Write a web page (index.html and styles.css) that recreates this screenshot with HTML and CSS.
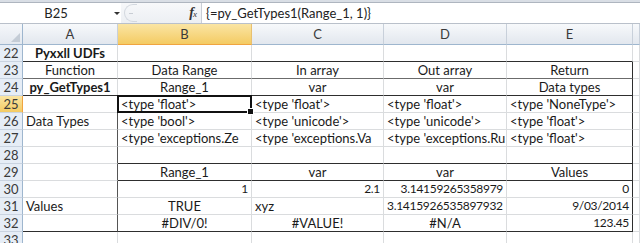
FILE: index.html
```html
<!DOCTYPE html>
<html lang="en">
<head>
    <meta charset="UTF-8">
    <title>Pyxll UDF types</title>
    <link rel="stylesheet" href="styles.css">
</head>
<body>
    <div class="ribbon-edge"></div>
    <div class="formula-bar">
        <div class="name-box">B25</div>
        <div class="name-arrow"></div>
        <div class="fx-area">
            <div class="grip"><span></span></div>
            <div class="fx"><i>f</i><span>x</span></div>
        </div>
        <div class="formula">{=py_GetTypes1(Range_1, 1)}</div>
    </div>

    <div class="sheet">
        <!-- column headers -->
        <div class="corner"><span></span></div>
        <div class="ch">A</div>
        <div class="ch sel">B</div>
        <div class="ch">C</div>
        <div class="ch">D</div>
        <div class="ch">E</div>
        <div class="ch"></div>

        <!-- 22 -->
        <div class="rh">22</div>
        <div class="cell c b bb">Pyxxll UDFs</div>
        <div class="cell bb"></div>
        <div class="cell bb"></div>
        <div class="cell bb"></div>
        <div class="cell bb"></div>
        <div class="cell"></div>

        <!-- 23 -->
        <div class="rh">23</div>
        <div class="cell c bm">Function</div>
        <div class="cell c bm">Data Range</div>
        <div class="cell c bm">In array</div>
        <div class="cell c bm">Out array</div>
        <div class="cell c bm br">Return</div>
        <div class="cell"></div>

        <!-- 24 -->
        <div class="rh">24</div>
        <div class="cell c b bb">py_GetTypes1</div>
        <div class="cell c bb">Range_1</div>
        <div class="cell c bb">var</div>
        <div class="cell c bb">var</div>
        <div class="cell c bb br">Data types</div>
        <div class="cell"></div>

        <!-- 25 -->
        <div class="rh sel">25</div>
        <div class="cell bv"></div>
        <div class="cell active">&lt;type 'float'&gt;</div>
        <div class="cell">&lt;type 'float'&gt;</div>
        <div class="cell">&lt;type 'float'&gt;</div>
        <div class="cell br">&lt;type 'NoneType'&gt;</div>
        <div class="cell"></div>

        <!-- 26 -->
        <div class="rh">26</div>
        <div class="cell bv">Data Types</div>
        <div class="cell">&lt;type 'bool'&gt;</div>
        <div class="cell">&lt;type 'unicode'&gt;</div>
        <div class="cell">&lt;type 'unicode'&gt;</div>
        <div class="cell br">&lt;type 'float'&gt;</div>
        <div class="cell"></div>

        <!-- 27 -->
        <div class="rh">27</div>
        <div class="cell bv"></div>
        <div class="cell">&lt;type 'exceptions.Ze</div>
        <div class="cell">&lt;type 'exceptions.Va</div>
        <div class="cell">&lt;type 'exceptions.Ru</div>
        <div class="cell br">&lt;type 'float'&gt;</div>
        <div class="cell"></div>

        <!-- 28 -->
        <div class="rh">28</div>
        <div class="cell bv"></div>
        <div class="cell bb"></div>
        <div class="cell bb"></div>
        <div class="cell bb"></div>
        <div class="cell bb br"></div>
        <div class="cell"></div>

        <!-- 29 -->
        <div class="rh">29</div>
        <div class="cell bv"></div>
        <div class="cell c bb">Range_1</div>
        <div class="cell c bb">var</div>
        <div class="cell c bb">var</div>
        <div class="cell c bb br">Values</div>
        <div class="cell"></div>

        <!-- 30 -->
        <div class="rh">30</div>
        <div class="cell bv"></div>
        <div class="cell r num">1</div>
        <div class="cell r num">2.1</div>
        <div class="cell r num">3.14159265358979</div>
        <div class="cell r num br">0</div>
        <div class="cell"></div>

        <!-- 31 -->
        <div class="rh">31</div>
        <div class="cell bv">Values</div>
        <div class="cell c">TRUE</div>
        <div class="cell">xyz</div>
        <div class="cell num">3.1415926535897932</div>
        <div class="cell r num br">9/03/2014</div>
        <div class="cell"></div>

        <!-- 32 -->
        <div class="rh">32</div>
        <div class="cell bv bb"></div>
        <div class="cell c bb">#DIV/0!</div>
        <div class="cell c bb">#VALUE!</div>
        <div class="cell c bb">#N/A</div>
        <div class="cell r num bb br">123.45</div>
        <div class="cell"></div>

        <!-- 33 -->
        <div class="rh">33</div>
        <div class="cell"></div>
        <div class="cell"></div>
        <div class="cell"></div>
        <div class="cell"></div>
        <div class="cell"></div>
        <div class="cell"></div>
    </div>
</body>
</html>
```

FILE: styles.css
```css
body {
    margin: 0;
    width: 640px;
    height: 243px;
    overflow: hidden;
    background: #fff;
    font-family: Lato, "Liberation Sans", sans-serif;
    font-size: 13px;
    color: #1a1a1a;
}

/* top strip + formula bar */
.ribbon-edge {
    height: 2px;
    background: #d9dee5;
    border-bottom: 1px solid #aeb5bf;
}

.formula-bar {
    display: flex;
    height: 20px;
    border-bottom: 1px solid #b9c0ca;
    background: #fff;
}

.name-box {
    width: 112px;
    line-height: 20px;
    text-align: center;
    color: #222;
}

.name-arrow {
    width: 9px;
    position: relative;
}

.name-arrow::after {
    content: "";
    position: absolute;
    left: 2px;
    top: 9px;
    border-left: 3px solid transparent;
    border-right: 3px solid transparent;
    border-top: 3px solid #333;
}

.fx-area {
    width: 76px;
    display: flex;
    align-items: center;
    justify-content: space-between;
    background: linear-gradient(#f7f8fa, #eceff3);
    padding-right: 4px;
}

.grip {
    width: 12px;
    height: 16px;
    margin-left: 3px;
    border: 1px solid #d3d8df;
    border-right: none;
    border-radius: 9px 0 0 9px;
    display: flex;
    align-items: center;
    justify-content: center;
}

.grip span {
    width: 4px;
    height: 1px;
    background: #c8cdd4;
}

.fx {
    font-family: "Liberation Serif", serif;
    font-size: 14px;
    color: #333;
    line-height: 20px;
}

.fx i {
    font-weight: bold;
}

.fx span {
    font-size: 9px;
    font-style: italic;
    margin-left: -1px;
}

.formula {
    flex: 1;
    border-left: 1px solid #c9ced6;
    padding-left: 4px;
    line-height: 20px;
    color: #222;
}

/* sheet grid */
.sheet {
    display: grid;
    grid-template-columns: 23px 95px 134px 132px 123px 126px 7px;
    grid-template-rows: 21px;
    grid-auto-rows: 17px;
}

.sheet > div {
    box-sizing: border-box;
    white-space: nowrap;
    overflow: hidden;
}

.corner {
    background: linear-gradient(#f5f7fa, #e3e8ef);
    border-right: 1px solid #9eb6ce;
    border-bottom: 1px solid #9eb6ce;
    position: relative;
}

.corner span {
    position: absolute;
    right: 2px;
    bottom: 2px;
    border-left: 9px solid transparent;
    border-bottom: 9px solid #c4ccd6;
}

.ch {
    background: linear-gradient(#f7f9fb, #e2e7ee);
    border-right: 1px solid #c8d0da;
    border-bottom: 1px solid #9eb6ce;
    text-align: center;
    line-height: 20px;
    color: #3a3a3a;
}

.ch.sel {
    background: linear-gradient(#fae5a4, #f4cb63);
    border-bottom-color: #f0a440;
    border-right-color: #e8c070;
}

.rh {
    background: #e6edf6;
    border-right: 1px solid #9eb6ce;
    border-bottom: 1px solid #c9d3e0;
    text-align: center;
    line-height: 16px;
    color: #3a3a3a;
}

.rh.sel {
    background: linear-gradient(#fae5a4, #f4cb63);
    border-right-color: #f0a440;
}

.cell {
    border-right: 1px solid #dadcde;
    border-bottom: 1px solid #dadcde;
    padding: 0 3px;
    line-height: 16px;
}

.c { text-align: center; }
.r { text-align: right; }
.b { font-weight: bold; }

/* Lato digits run wider than the sheet's font */
.num {
    font-size: 12px;
    letter-spacing: -0.3px;
}

.cell.bb { border-bottom-color: #2e2e2e; }
.cell.bm { border-bottom-color: #6b6b6b; }
.cell.br { border-right-color: #2e2e2e; }
.cell.bv { border-right-color: #555; }

.cell.active {
    position: relative;
    overflow: visible;
}

.cell.active::after {
    content: "";
    position: absolute;
    left: -1px;
    top: -1px;
    right: -1px;
    bottom: -1px;
    border: 2px solid #111;
}

.cell.active::before {
    content: "";
    position: absolute;
    right: -3px;
    bottom: -3px;
    width: 5px;
    height: 5px;
    background: #111;
    border: 1px solid #fff;
    z-index: 1;
}
```
